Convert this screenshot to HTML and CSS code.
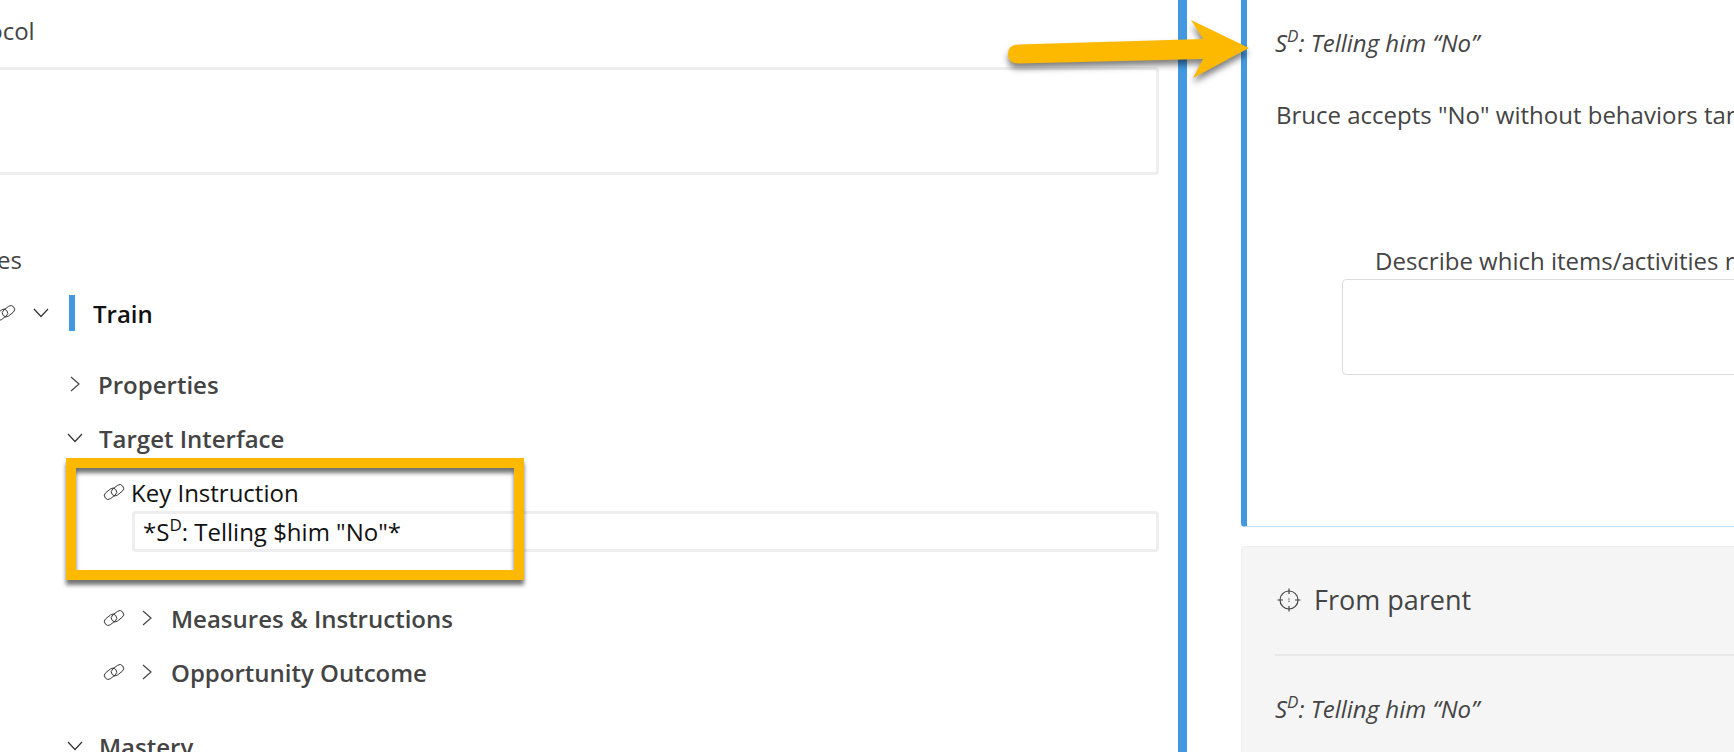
FILE: index.html
```html
<!DOCTYPE html>
<html lang="en">
<head>
<meta charset="utf-8">
<title>Protocol</title>
<link rel="stylesheet" href="styles.css">
</head>
<body>
<svg class="defs" width="0" height="0" aria-hidden="true">
  <symbol id="link" viewBox="0 0 22 16">
    <g fill="none" stroke="currentColor" stroke-width="0.9">
      <rect x="0.8" y="6" width="13.500" height="7.600" rx="3.800" transform="rotate(-38 7.500 9.800)"/>
      <rect x="7.700" y="2.400" width="13.500" height="7.600" rx="3.800" transform="rotate(-38 14.500 6.200)"/>
    </g>
  </symbol>
  <symbol id="chev-right" viewBox="0 0 10 16"><path d="M1 1 L9 8 L1 15" fill="none" stroke="currentColor" stroke-width="1.2"/></symbol>
  <symbol id="chev-down" viewBox="0 0 16 10"><path d="M1 1 L8 8.5 L15 1" fill="none" stroke="currentColor" stroke-width="1.2"/></symbol>
</svg>
<div class="page">
  <main class="left">
    <div class="label-protocol">Protocol</div>
    <div class="big-box"></div>
    <div class="label-phases">Phases</div>
    <div class="train-row">
      <svg class="ico-link"><use href="#link"/></svg>
      <svg class="chev-d"><use href="#chev-down"/></svg>
      <span class="train-bar"></span>
      <span class="train-name">Train</span>
    </div>
    <div class="sect sect-props">
      <svg class="chev-r"><use href="#chev-right"/></svg>
      <span class="sect-title">Properties</span>
    </div>
    <div class="sect sect-target">
      <svg class="chev-d"><use href="#chev-down"/></svg>
      <span class="sect-title">Target Interface</span>
    </div>
    <div class="key-block">
      <div class="key-label">
        <svg class="ico-link"><use href="#link"/></svg>
        <span>Key Instruction</span>
      </div>
      <div class="key-input">*S<sup>D</sup>: Telling $him "No"*</div>
    </div>
    <div class="sub sub-measures">
      <svg class="ico-link"><use href="#link"/></svg>
      <svg class="chev-r"><use href="#chev-right"/></svg>
      <span class="sect-title">Measures &amp; Instructions</span>
    </div>
    <div class="sub sub-opp">
      <svg class="ico-link"><use href="#link"/></svg>
      <svg class="chev-r"><use href="#chev-right"/></svg>
      <span class="sect-title">Opportunity Outcome</span>
    </div>
    <div class="sect sect-mastery">
      <svg class="chev-d"><use href="#chev-down"/></svg>
      <span class="sect-title">Mastery</span>
    </div>
  </main>
  <div class="divider"></div>
  <aside class="right">
    <section class="card">
      <p class="sd sd-top"><em>S<sup>D</sup>: Telling him “No”</em></p>
      <p class="accepts">Bruce accepts "No" without behaviors targeted for reduction</p>
      <div class="describe">
        <div class="describe-label">Describe which items/activities required</div>
        <div class="describe-box"></div>
      </div>
    </section>
    <section class="parent">
      <div class="parent-head">
        <svg class="ico-target" viewBox="0 0 24 24" fill="none" stroke="currentColor" stroke-width="1.2">
          <circle cx="12" cy="12" r="9"/>
          <path d="M12 0.5V6 M12 18V23.500 M0.500 12H6 M18 12H23.500"/>
          <path d="M12 10.500V11.500 M12 12.800V13.800" stroke-width="1.4"/>
        </svg>
        <span>From parent</span>
      </div>
      <p class="sd"><em>S<sup>D</sup>: Telling him “No”</em></p>
    </section>
  </aside>
</div>
<div class="callout"></div>
<svg class="arrow" viewBox="0 0 260 80" width="260" height="80" aria-hidden="true">
  <path d="M12 24.500 L197 19 L185 0 L243 28 L187 58 L197 39 L12 43.500 Q2 43.500 2 34 Q2 24.800 12 24.500 Z"/>
</svg>
</body>
</html>
```
FILE: styles.css
```css
* { box-sizing: border-box; }
html, body { margin: 0; height: 100%; }
body {
  width: 1734px;
  height: 752px;
  overflow: hidden;
  position: relative;
  background: #fff;
  font-family: "Open Sans", sans-serif;
  color: #444;
  font-size: 24px;
}
.defs { position: absolute; }
.page { display: flex; height: 752px; overflow: hidden; }
.left { width: 1178px; flex: none; padding-right: 19px; overflow: hidden; }
.divider { width: 9px; flex: none; background: #4299e1; }
.right { flex: 1; padding-left: 54px; min-width: 0; overflow: hidden; }

.label-protocol { height: 30px; margin-top: 16px; margin-left: -59px; line-height: 30px; white-space: nowrap; }
.big-box { height: 108px; margin-top: 21px; margin-left: -20px; border: 3px solid #eee; border-radius: 4px; }
.label-phases { margin-top: 70px; margin-left: -57px; line-height: 30px; height: 30px; }

.train-row { display: flex; align-items: center; height: 36px; margin-top: 20px; margin-left: -6px; }
.train-row .ico-link { margin-right: 17px; }
.train-row .chev-d { margin-right: 20px; }
.train-bar { width: 6px; height: 36px; background: #4299e1; margin-right: 18px; }
.train-name { font-weight: 600; color: #111; }

.ico-link { width: 22px; height: 16px; flex: none; color: #333; }
.chev-r { width: 10px; height: 16px; flex: none; color: #444; }
.chev-d { width: 16px; height: 10px; flex: none; color: #333; }

.sect { display: flex; align-items: center; height: 30px; margin-left: 67px; font-weight: 600; }
.sect .chev-r { margin: 0 18px 0 3px; }
.sect .chev-d { margin-right: 16px; }
.sect-props { margin-top: 38px; }
.sect-target { margin-top: 24px; }
.sect-mastery { margin-top: 44px; }
.sect-title { white-space: nowrap; }

.key-block { margin: 24px 0 0 103px; color: #111; }
.key-label { display: flex; align-items: center; height: 30px; gap: 6px; }
.key-input { margin: 4px 0 0 29px; height: 41px; border: 3px solid #eee; border-radius: 4px; padding-left: 8px; line-height: 35px; white-space: nowrap; }
sup { font-size: 17px; line-height: 0; vertical-align: baseline; position: relative; top: -10px; }

.sub { display: flex; align-items: center; height: 30px; margin-left: 103px; font-weight: 600; }
.sub .ico-link { margin-right: 17px; }
.sub .chev-r { margin-right: 19px; }
.sub-measures { margin-top: 51px; }
.sub-opp { margin-top: 24px; }

.card { height: 527px; margin-right: -40px; border-left: 6px solid #4299e1; border-bottom: 1px solid #bedcf5; border-bottom-left-radius: 4px; padding: 28px 0 0 28px; overflow: hidden; }
.sd { margin: 0; line-height: 30px; white-space: nowrap; }
.accepts { margin: 42px 0 0 1px; line-height: 30px; white-space: nowrap; }
.describe { margin: 116px 0 0 67px; }
.describe-label { margin-left: 33px; line-height: 30px; white-space: nowrap; }
.describe-box { height: 96px; margin-top: 3px; border: 1px solid #ddd; border-radius: 4px; }

.parent { margin: 19px -40px 0 0; height: 300px; background: #f5f5f5; border: 1px solid #eee; border-radius: 4px; padding: 0 0 0 33px; }
.parent-head { display: flex; align-items: center; gap: 13px; height: 109px; padding-bottom: 2px; border-bottom: 2px solid #e8e8e8; font-size: 27px; }
.ico-target { width: 24px; height: 24px; flex: none; margin-left: 2px; color: #444; }
.parent .sd { margin-top: 38px; }

.callout { position: absolute; left: 66px; top: 458px; width: 458px; height: 122px; border: 10px solid #fdb900; filter: drop-shadow(0 5px 2px rgba(0,0,0,.55)); }
.arrow { position: absolute; left: 1006px; top: 20px; fill: #fdb900; filter: drop-shadow(0 5px 3px rgba(0,0,0,.5)); overflow: visible; }
```
